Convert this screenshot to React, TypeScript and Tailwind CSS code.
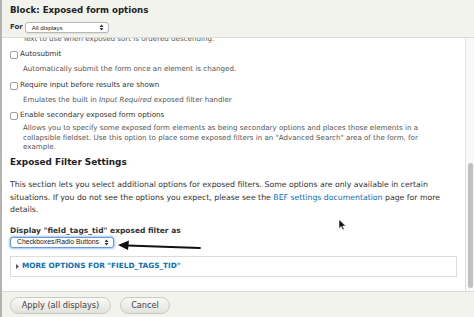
import React from "react";

const font = { fontFamily: '"DejaVu Sans", "Noto Sans", sans-serif' };
const selectFont = { fontFamily: '"Liberation Sans", Arial, sans-serif' };

function Checkbox({ label }: { label: string }) {
    return (
        <label className="flex items-center gap-[2px] h-[11px] text-[7.2px] text-[#333]">
            <span className="w-[8px] h-[8px] rounded-[2px] border border-[#a0a0a0] bg-white shrink-0" />
            {label}
        </label>
    );
}

function Desc({ children }: { children: React.ReactNode }) {
    return <p className="pl-[13px] text-[7.1px] leading-[9.5px] text-[#555] whitespace-nowrap">{children}</p>;
}

function Arrows() {
    return (
        <svg width="5" height="7" viewBox="0 0 5 7" className="shrink-0">
            <path d="M2.5 0.5 L4.5 3 H0.5 Z M2.5 6.5 L4.5 4 H0.5 Z" fill="#333" />
        </svg>
    );
}

export default function App() {
    return (
        <div style={font} className="w-[474px] h-[317px] overflow-hidden flex flex-col bg-white border-l-[2px] border-[#b3b3b3]">
            {/* header */}
            <div className="h-[38px] shrink-0 bg-[#f3f3ee] border-b border-[#dcdcd6] px-[8px] pt-[3px]">
                <h1 className="text-[8.6px] font-bold text-[#222] leading-[14px]">Block: Exposed form options</h1>
                <div className="flex items-center gap-[2px] mt-[5px]">
                    <span className="text-[7px] font-bold text-[#333]">For</span>
                    <div className="w-[84px] h-[11px] rounded-[3px] border border-[#b8b8b8] bg-white flex items-center justify-between pl-[6px] pr-[4px] shadow-[0_1px_1px_rgba(0,0,0,0.08)]">
                        <span className="text-[6.2px] text-[#222]" style={selectFont}>All displays</span>
                        <Arrows />
                    </div>
                </div>
            </div>

            {/* body */}
            <div className="flex-1 flex min-h-0">
                <div className="flex-1 relative overflow-hidden border-r border-[#e0e0e0] pl-[8px] pr-[8px]">
                    <div className="-mt-[4px]">
                        <div className="h-[10px] flex items-center">
                            <Desc>Text to use when exposed sort is ordered descending.</Desc>
                        </div>
                        <div className="mt-[5px]">
                            <Checkbox label="Autosubmit" />
                        </div>
                        <div className="mt-[4px] h-[10px] flex items-center">
                            <Desc>Automatically submit the form once an element is changed.</Desc>
                        </div>
                        <div className="mt-[6px]">
                            <Checkbox label="Require input before results are shown" />
                        </div>
                        <div className="mt-[4px] h-[10px] flex items-center">
                            <Desc>
                                Emulates the built in <em>Input Required</em> exposed filter handler
                            </Desc>
                        </div>
                        <div className="mt-[5px]">
                            <Checkbox label="Enable secondary exposed form options" />
                        </div>
                        <div className="mt-[2px]">
                            <Desc>
                                Allows you to specify some exposed form elements as being secondary options and places those elements in a
                                <br />
                                collapsible fieldset. Use this option to place some exposed filters in an "Advanced Search" area of the form, for
                                <br />
                                example.
                            </Desc>
                        </div>
                        <h2 className="mt-[4.5px] text-[8.9px] font-bold text-[#222] leading-[13px]">Exposed Filter Settings</h2>
                        <p className="mt-[10px] text-[7.75px] leading-[12.5px] text-[#333] whitespace-nowrap">
                            This section lets you select additional options for exposed filters. Some options are only available in certain
                            <br />
                            situations. If you do not see the options you expect, please see the{" "}
                            <a className="text-[#0b6fb6]">BEF settings documentation</a> page for more
                            <br />
                            details.
                        </p>
                        <div className="mt-[8.5px] h-[11px] flex items-center text-[7.5px] font-bold text-[#333]">
                            Display "field_tags_tid" exposed filter as
                        </div>
                        <div className="mt-[1px] w-[104px] h-[11px] rounded-[3px] border border-[#6a9ad8] bg-white flex items-center justify-between pl-[6px] pr-[4px] shadow-[0_0_2px_1px_rgba(90,150,230,0.55)]">
                            <span className="text-[6.8px] text-[#222]" style={selectFont}>Checkboxes/Radio Buttons</span>
                            <Arrows />
                        </div>
                        <div className="mt-[8px] h-[21px] border border-[#dcdcdc] flex items-center gap-[3px] pl-[5px]">
                            <svg width="3" height="5" viewBox="0 0 3 5"><path d="M0 0 L3 2.5 L0 5 Z" fill="#555" /></svg>
                            <span className="text-[7.3px] font-bold text-[#0b6fb6]">MORE OPTIONS FOR "FIELD_TAGS_TID"</span>
                        </div>
                    </div>

                    {/* annotation arrow */}
                    <svg className="absolute left-[113px] top-[200px]" width="90" height="16" viewBox="0 0 90 16">
                        <path d="M85 10 L12 7.5" stroke="#111" strokeWidth="1.8" strokeLinecap="round" />
                        <path d="M3 7 L14 2.5 L13 12 Z" fill="#111" />
                    </svg>
                    {/* mouse cursor */}
                    <svg className="absolute left-[336px] top-[181px]" width="9" height="12" viewBox="0 0 9 12">
                        <path d="M1 0.5 L1 9.5 L3.2 7.6 L4.8 11 L6.2 10.3 L4.7 7 L7.8 7 Z" fill="#111" stroke="#fff" strokeWidth="0.6" />
                    </svg>
                </div>
                {/* scrollbar */}
                <div className="w-[8px] bg-[#f8f8f8] flex flex-col pt-[125px] pb-[3px] items-center">
                    <div className="w-[5px] flex-1 rounded-full bg-[#c0c0c0]" />
                </div>
            </div>

            {/* footer */}
            <div className="h-[26px] shrink-0 bg-[#f3f3ee] border-t border-[#dcdcd6] flex items-start pt-[5px] gap-[9px] px-[8px]">
                <button className="h-[17px] w-[101px] rounded-full border border-[#c8c8c4] bg-gradient-to-b from-[#f9f9f7] to-[#e2e2de] text-[8.2px] text-[#444]">
                    Apply (all displays)
                </button>
                <button className="h-[17px] w-[50px] rounded-full border border-[#c8c8c4] bg-gradient-to-b from-[#f9f9f7] to-[#e2e2de] text-[8.2px] text-[#444]">
                    Cancel
                </button>
            </div>
        </div>
    );
}
